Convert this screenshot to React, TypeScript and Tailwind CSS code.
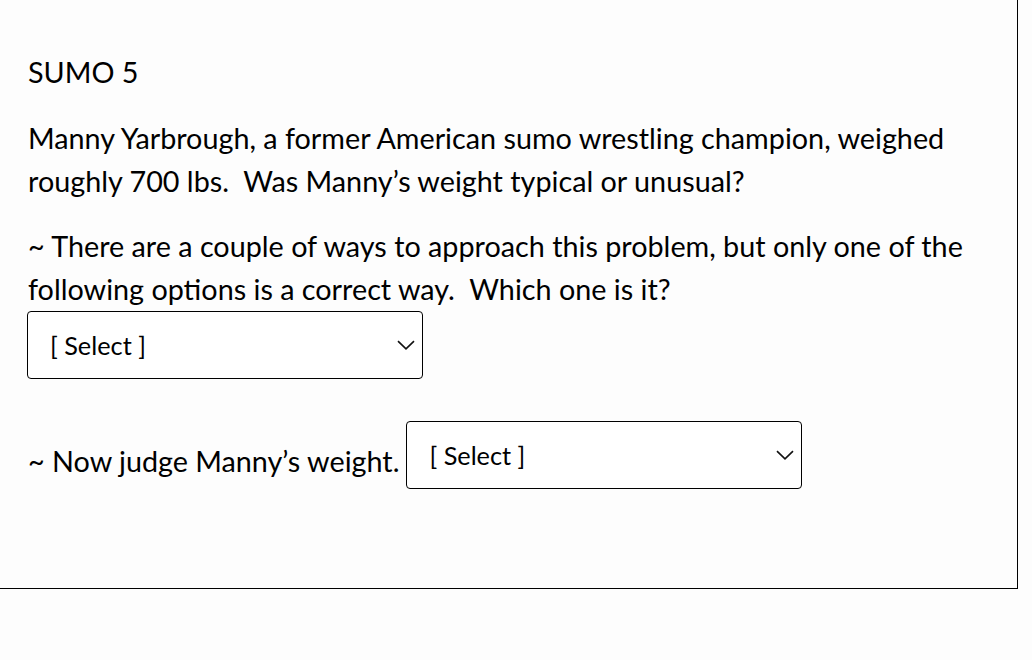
import React from "react";

function FakeSelect() {
  return (
    <div className="relative flex h-[68px] w-[396px] shrink-0 items-center rounded-[4px] border border-black bg-white pl-[22px] pt-[1px] text-[25.3px] leading-none text-black">
      <span>[ Select ]</span>
      <svg
        className="absolute right-[7px] top-1/2 -translate-y-1/2"
        width="18"
        height="10"
        viewBox="0 0 18 10"
        fill="none"
      >
        <path d="M1 1.2 L9 8.8 L17 1.2" stroke="#111" strokeWidth="1.6" />
      </svg>
    </div>
  );
}

export default function App() {
  return (
    <div className="min-h-[660px] w-full bg-[#fdfdfd] font-['Lato',sans-serif] text-black">
      <div className="h-[589px] w-[1018px] border-r border-b border-black pl-[28px] pr-[28px] pt-[51px] text-[28.75px] leading-[43px]">
        <p>SUMO 5</p>
        <p className="mt-[23px]">
          Manny Yarbrough, a former American sumo wrestling champion, weighed roughly 700 lbs.&nbsp; Was Manny’s weight typical or unusual?
        </p>
        <p className="mt-[22px]">
          ~ There are a couple of ways to approach this problem, but only one of the following options is a correct way.&nbsp; Which one is it?
        </p>
        <div className="-ml-[1px]">
          <FakeSelect />
        </div>
        <div className="mt-[42px] flex items-start gap-[7px]">
          <span className="mt-[19px]">~ Now judge Manny’s weight.</span>
          <FakeSelect />
        </div>
      </div>
    </div>
  );
}
